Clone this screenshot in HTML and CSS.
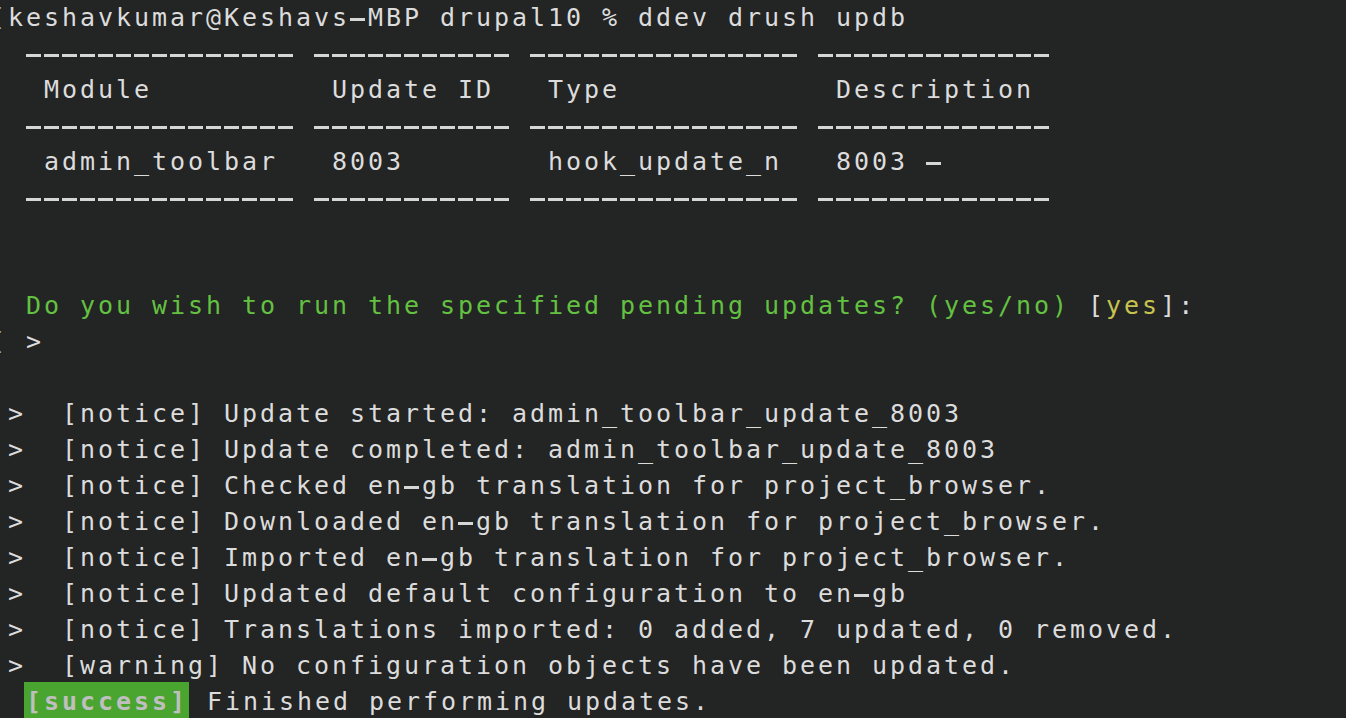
FILE: index.html
```html
<!DOCTYPE html>
<html>
<head>
<meta charset="UTF-8">
<meta name="viewport" content="width=device-width, initial-scale=1">
<title>ddev drush updb</title>
<link rel="stylesheet" href="styles.css">
</head>
<body>
<div class="terminal">
	<div class="line"><span class="sel">[</span>keshavkumar@Keshavs<span class="rule">-</span>MBP drupal10 % ddev drush updb</div>
	<!-- 更新列表 -->
	<div class="line"> <span class="rule">---------------</span> <span class="rule">-----------</span> <span class="rule">---------------</span> <span class="rule">-------------</span></div>
	<div class="line">  Module          Update ID   Type            Description</div>
	<div class="line"> <span class="rule">---------------</span> <span class="rule">-----------</span> <span class="rule">---------------</span> <span class="rule">-------------</span></div>
	<div class="line">  admin_toolbar   8003        hook_update_n   8003 <span class="rule">-</span></div>
	<div class="line"> <span class="rule">---------------</span> <span class="rule">-----------</span> <span class="rule">---------------</span> <span class="rule">-------------</span></div>
	<div class="line"> </div>
	<div class="line"> </div>
	<!-- 确认 -->
	<div class="line"> <span class="green">Do you wish to run the specified pending updates? (yes/no)</span> [<span class="yellow">yes</span>]:</div>
	<div class="line"><span class="sel">[</span> &gt;</div>
	<div class="line"> </div>
	<!-- 日志 -->
	<div class="line">&gt;  [notice] Update started: admin_toolbar_update_8003</div>
	<div class="line">&gt;  [notice] Update completed: admin_toolbar_update_8003</div>
	<div class="line">&gt;  [notice] Checked en<span class="rule">-</span>gb translation for project_browser.</div>
	<div class="line">&gt;  [notice] Downloaded en<span class="rule">-</span>gb translation for project_browser.</div>
	<div class="line">&gt;  [notice] Imported en<span class="rule">-</span>gb translation for project_browser.</div>
	<div class="line">&gt;  [notice] Updated default configuration to en<span class="rule">-</span>gb</div>
	<div class="line">&gt;  [notice] Translations imported: 0 added, 7 updated, 0 removed.</div>
	<div class="line">&gt;  [warning] No configuration objects have been updated.</div>
	<div class="line"> <span class="success">[success]</span> Finished performing updates.</div>
</div>
</body>
</html>
```

FILE: styles.css
```css
*{
	margin:0;
	padding:0;
}
html,body{
	height:100%;
	background:#232424;
}
body{
	overflow:hidden;
}
.terminal{
	padding-left:8px;
	font-family:"DejaVu Sans Mono","Liberation Mono",monospace;
	font-size:25px;
	letter-spacing:2.95px; /* 每个字符宽18px */
	line-height:36px;
	color:#dcdcdc;
}
.line{
	height:36px;
	white-space:pre;
}
.sel{
	margin-left:-18px; /* 左边被截掉的方括号 */
	color:#a8a8a8;
}
/* 短横：终端字体的横线比较长，用背景画出来 */
.rule{
	display:inline-block;
	height:36px;
	vertical-align:top;
	color:transparent;
	background-image:linear-gradient(to right,#d6d6d6 15px,transparent 15px);
	background-size:18px 3px;
	background-position:0 17.5px;
	background-repeat:repeat-x;
}
.green{
	color:#63c141;
}
.yellow{
	color:#c6c34f;
}
.success{
	display:inline-block;
	margin-left:-2px;
	padding:2px 1px 0 2px;
	height:36px;
	margin-top:-2px;
	vertical-align:top;
	font-weight:bold;
	color:#bfbfbf;
	background:#4aa530;
}
```
